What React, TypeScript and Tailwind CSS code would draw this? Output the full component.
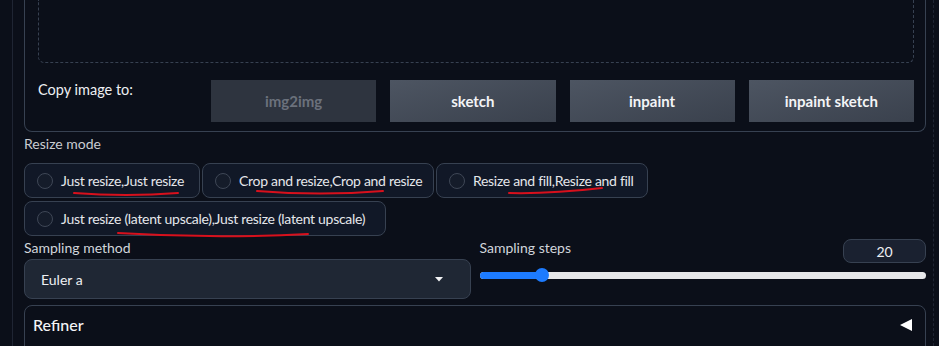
import React from 'react';

const copyTargets = [
  { label: 'img2img', disabled: true },
  { label: 'sketch', disabled: false },
  { label: 'inpaint', disabled: false },
  { label: 'inpaint sketch', disabled: false },
];

const resizeModes = [
  { label: 'Just resize,Just resize', w: 'w-[176px]' },
  { label: 'Crop and resize,Crop and resize', w: 'w-[232px]' },
  { label: 'Resize and fill,Resize and fill', w: 'w-[212px]' },
  { label: 'Just resize (latent upscale),Just resize (latent upscale)', w: 'w-[362px]' },
];

function Radio({ label, w }: { label: string; w: string }) {
  return (
    <label className={`${w} h-[35px] flex items-center gap-2 pl-3 rounded-lg border border-[#374151] bg-[#111827] text-[14px] tracking-[-0.3px] text-[#e5e7eb] whitespace-nowrap cursor-pointer`}>
      <span className="w-4 h-4 rounded-full border border-[#3f4756] bg-[#151c2a] shrink-0"></span>
      {label}
    </label>
  );
}

export default function App() {
  const steps = 20;
  const pct = ((steps - 1) / (150 - 1)) * 100;

  return (
    <div className="relative w-[939px] h-[346px] overflow-hidden bg-[#0b0f19] font-['Lato','Noto_Sans',sans-serif] select-none">
      <div className="ml-3 w-[922px] h-full border-l border-r border-[#1f2533] [border-right-style:dashed] pl-[11px] pr-[7px]">

        {/* image panel, top is cut off */}
        <div className="border-x border-b border-[#374151] rounded-b-lg pl-[13px] pr-[11px] pb-[9px]">
          <div className="h-[63px] border-x border-b border-dashed border-[#374151] rounded-b-md"></div>
          <div className="mt-[17px] flex items-start">
            <div className="w-[173px] leading-5 text-[14.5px] text-[#eef0f3]">Copy image to:</div>
            <div className="flex-1 grid grid-cols-4 gap-[14px]">
              {copyTargets.map((t) => (
                <button
                  key={t.label}
                  className={`h-[42px] text-[15px] font-bold ${t.disabled ? 'bg-[#2e343f] text-[#6b717c]' : 'bg-gradient-to-br from-[#4d5562] to-[#3a414d] text-[#f3f4f6]'}`}
                >
                  {t.label}
                </button>
              ))}
            </div>
          </div>
        </div>

        {/* resize mode */}
        <div className="mt-[2px] h-5 leading-5 text-[14px] text-[#c9ccd1]">Resize mode</div>
        <div className="mt-[9px] flex flex-wrap gap-x-[2px] gap-y-[3px]">
          {resizeModes.map((m) => (
            <Radio key={m.label} label={m.label} w={m.w} />
          ))}
        </div>

        {/* sampling */}
        <div className="mt-[2px] grid grid-cols-2 gap-[9px]">
          <div>
            <div className="h-5 leading-5 text-[14px] text-[#d1d5db]">Sampling method</div>
            <div className="mt-[1px] h-[40px] flex items-center justify-between pl-4 pr-[27px] rounded-lg border border-[#374151] bg-[#1f2734] text-[14px] text-[#eef0f3]">
              <span>Euler a</span>
              <svg width="8" height="5" viewBox="0 0 8 5"><polygon points="0,0 8,0 4,4.5" fill="#f3f4f6" /></svg>
            </div>
          </div>
          <div>
            <div className="flex justify-between items-start">
              <div className="h-5 leading-5 text-[14px] text-[#d1d5db]">Sampling steps</div>
              <div className="mt-[1px] w-[83px] h-[24px] flex items-center justify-center rounded-lg border border-[#374151] bg-[#1a2130] text-[14px] text-[#eef0f3]">
                {steps}
              </div>
            </div>
            <div className="relative mt-[5px] h-[14px] flex items-center">
              <div className="w-full h-[7px] rounded-full bg-[#e7e8ea] overflow-hidden">
                <div className="h-full bg-[#1d7bff]" style={{ width: `${pct}%` }}></div>
              </div>
              <div
                className="absolute top-0 w-[14px] h-[14px] rounded-full bg-[#1d7bff]"
                style={{ left: `calc(${pct / 100} * (100% - 14px))` }}
              ></div>
            </div>
          </div>
        </div>

        {/* refiner accordion */}
        <div className="mt-[6px] h-[60px] rounded-lg border border-[#374151] flex items-start justify-between pl-2 pr-[13px] pt-[9px]">
          <span className="leading-5 text-[16px] font-medium text-[#f3f4f6]">Refiner</span>
          <svg width="12" height="12" viewBox="0 0 12 12" className="mt-1">
            <polygon points="12,0 12,12 0,6" fill="#ffffff" />
          </svg>
        </div>
      </div>

      {/* hand-drawn red underlines */}
      <svg className="absolute inset-0 pointer-events-none" width="939" height="346" viewBox="0 0 939 346" fill="none">
        <g stroke="#d8101c" strokeWidth="2" strokeLinecap="round">
          <path d="M74 193 Q126 197 178 193" />
          <path d="M257 191 Q320 196 383 191" />
          <path d="M509 193 Q550 194 602 188" />
          <path d="M118 233 Q213 239 308 234" />
        </g>
      </svg>
    </div>
  );
}
